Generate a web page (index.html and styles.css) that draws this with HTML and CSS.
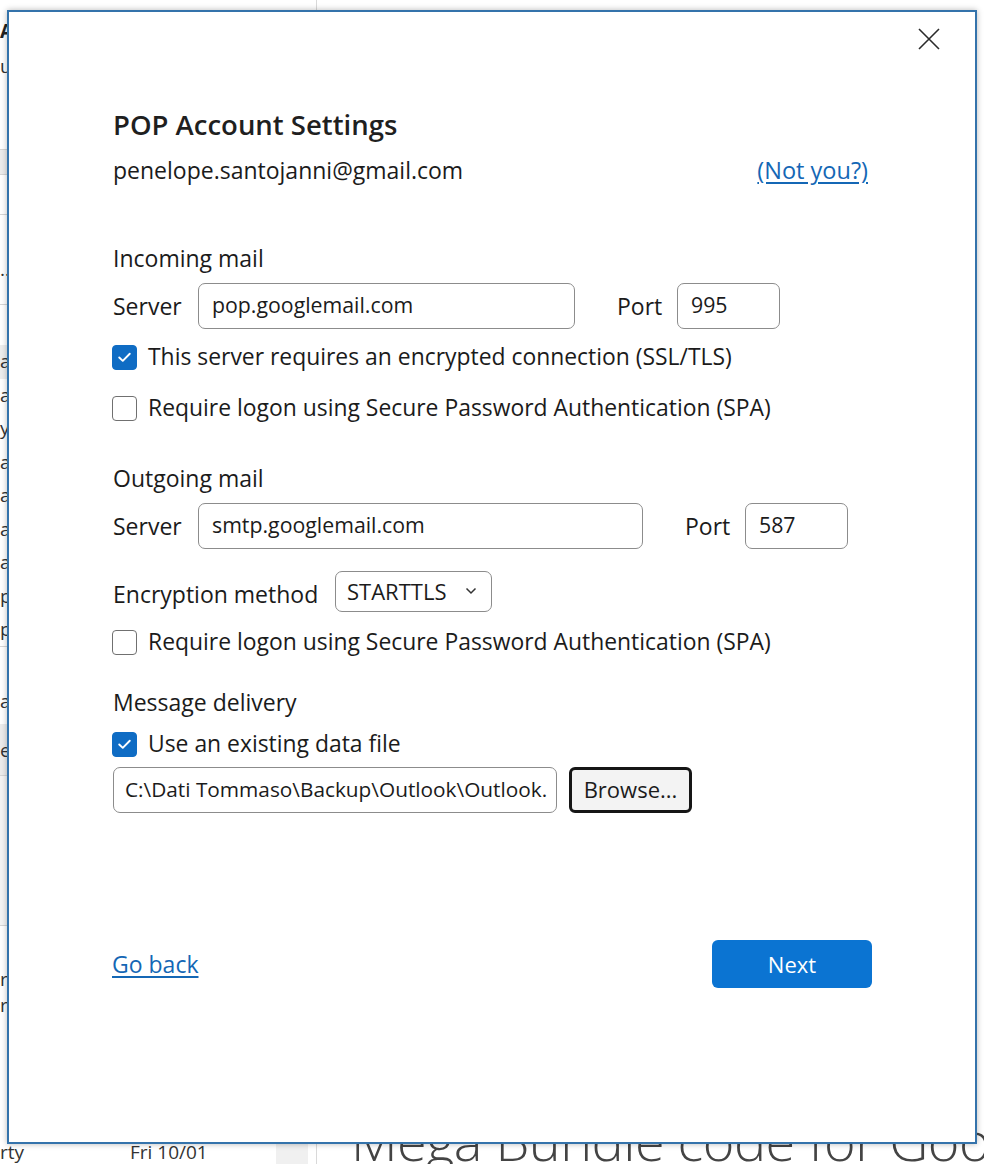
FILE: index.html
```html
<!DOCTYPE html>
<html lang="en">

<head>
    <meta charset="UTF-8">
    <meta name="viewport" content="width=device-width, initial-scale=1.0">
    <title>POP Account Settings</title>
    <link rel="stylesheet" href="styles.css">
</head>

<body>

    <!-- Outlook window behind the dialog -->
    <div class="app">
        <div class="list">
            <div class="list-top">
                <div class="acct">Alerts</div>
                <div class="sub">unread</div>
            </div>
            <div class="tab-row">Focused</div>
            <div class="filter-row">Other</div>
            <div class="search-row">…</div>
            <div class="group-head"></div>
            <div class="mail sel">a</div>
            <div class="mail">a</div>
            <div class="mail">y</div>
            <div class="mail">a</div>
            <div class="mail">a</div>
            <div class="mail">a</div>
            <div class="mail">a</div>
            <div class="mail">p</div>
            <div class="mail last">p</div>
            <div class="mail-gap"></div>
            <div class="mail">a</div>
            <div class="mail-band">e</div>
            <div class="mail-shade"></div>
            <div class="mail small">r</div>
            <div class="mail small">r</div>
            <div class="list-bottom">
                <span class="from">rty</span>
                <span class="date">Fri 10/01</span>
                <span class="flag-col"></span>
            </div>
        </div>
        <div class="reading">
            <h1 class="subject">Mega Bundle code for Google Workspace</h1>
        </div>
    </div>

    <div class="dialog">
        <div class="topbar">
            <button class="close" aria-label="Close">
                <svg width="22" height="22" viewBox="0 0 22 22">
                    <path d="M1 1 L21 21 M21 1 L1 21" stroke="#2b2b2b" stroke-width="1.6" fill="none" />
                </svg>
            </button>
        </div>

        <div class="content">
            <h2 class="title">POP Account Settings</h2>
            <div class="account">
                <span>penelope.santojanni@gmail.com</span>
                <a href="#" class="link not-you">(Not you?)</a>
            </div>

            <div class="group incoming">
                <div class="section-label">Incoming mail</div>
                <div class="field-row">
                    <span class="field-label">Server</span>
                    <div class="input server-in">pop.googlemail.com</div>
                    <span class="port-label">Port</span>
                    <div class="input port">995</div>
                </div>
                <div class="check-row first">
                    <span class="box on">
                        <svg width="24" height="24" viewBox="0 0 24 24">
                            <path d="M6.5 12.5 L10.2 16 L17.5 8.6" stroke="#fff" stroke-width="2" fill="none" stroke-linecap="round" stroke-linejoin="round" />
                        </svg>
                    </span>
                    <span>This server requires an encrypted connection (SSL/TLS)</span>
                </div>
                <div class="check-row">
                    <span class="box"></span>
                    <span>Require logon using Secure Password Authentication (SPA)</span>
                </div>
            </div>

            <div class="group outgoing">
                <div class="section-label">Outgoing mail</div>
                <div class="field-row">
                    <span class="field-label">Server</span>
                    <div class="input server-out">smtp.googlemail.com</div>
                    <span class="port-label">Port</span>
                    <div class="input port">587</div>
                </div>
                <div class="enc-row">
                    <span class="enc-label">Encryption method</span>
                    <div class="select">
                        <span>STARTTLS</span>
                        <svg width="12" height="8" viewBox="0 0 12 8">
                            <path d="M1.5 1.5 L6 6 L10.5 1.5" stroke="#333" stroke-width="1.5" fill="none" />
                        </svg>
                    </div>
                </div>
                <div class="check-row first">
                    <span class="box"></span>
                    <span>Require logon using Secure Password Authentication (SPA)</span>
                </div>
            </div>

            <div class="group delivery">
                <div class="section-label">Message delivery</div>
                <div class="check-row tight">
                    <span class="box on">
                        <svg width="24" height="24" viewBox="0 0 24 24">
                            <path d="M6.5 12.5 L10.2 16 L17.5 8.6" stroke="#fff" stroke-width="2" fill="none" stroke-linecap="round" stroke-linejoin="round" />
                        </svg>
                    </span>
                    <span>Use an existing data file</span>
                </div>
                <div class="path-row">
                    <div class="input path">C:\Dati Tommaso\Backup\Outlook\Outlook.</div>
                    <button class="browse">Browse...</button>
                </div>
            </div>

            <div class="footer">
                <a href="#" class="link">Go back</a>
                <button class="next">Next</button>
            </div>
        </div>
    </div>

</body>

</html>
```

FILE: styles.css
```css
* {
    margin: 0;
    padding: 0;
    box-sizing: border-box;
}

body {
    font-family: "Open Sans", "Noto Sans", sans-serif;
    color: #1b1b1b;
    background: #fff;
    height: 1164px;
    overflow: hidden;
    position: relative;
}

/* window behind */

.app {
    display: flex;
    height: 1164px;
}

.list {
    width: 317px;
    border-right: 1px solid #d9d9d9;
    display: flex;
    flex-direction: column;
    font-size: 19px;
    color: #333;
}

.list-top {
    height: 150px;
    padding-top: 18px;
    border-bottom: 1px solid #d6d6d6;
}

.acct {
    font-weight: 700;
    line-height: 26px;
    color: #222;
}

.sub {
    line-height: 26px;
    margin-top: 9px;
}

.tab-row {
    height: 25px;
    background: #ececec;
    border-bottom: 1px solid #d6d6d6;
    color: transparent;
}

.filter-row {
    height: 40px;
    border-bottom: 1px solid #d6d6d6;
    color: transparent;
}

.search-row {
    height: 90px;
    border-bottom: 1px solid #d6d6d6;
    display: flex;
    align-items: flex-end;
    padding-bottom: 22px;
}

.group-head {
    height: 40px;
}

.mail {
    height: 33.5px;
    line-height: 33.5px;
}

.mail.sel {
    background: #ededed;
}

.mail.last {
    border-bottom: 1px solid #d6d6d6;
}

.mail-gap {
    height: 38px;
}

.mail-band {
    height: 52px;
    margin-top: 6px;
    line-height: 52px;
    background: #ececec;
    border-bottom: 1px solid #d6d6d6;
}

.mail-shade {
    height: 150px;
    background: #f4f4f4;
    border-bottom: 1px solid #d6d6d6;
}

.mail.small {
    height: 26px;
    line-height: 26px;
    margin-top: 40px;
}

.mail.small + .mail.small {
    margin-top: 0;
}

.list-bottom {
    margin-top: auto;
    height: 24px;
    display: flex;
    align-items: flex-end;
    line-height: 24px;
}

.from {
    width: 130px;
}

.date {
    width: 146px;
    font-size: 19px;
}

.flag-col {
    width: 32px;
    height: 24px;
    background: #f0f0f0;
}

.reading {
    flex: 1;
    padding: 1110px 0 0 34px;
    overflow: hidden;
}

.subject {
    font-size: 54px;
    font-weight: 300;
    line-height: 60px;
    color: #444;
    white-space: nowrap;
    letter-spacing: -0.5px;
}

/* dialog */

.dialog {
    position: absolute;
    left: 7px;
    top: 10px;
    width: 970px;
    height: 1134px;
    background: #fff;
    border: 2px solid #3473ab;
    box-shadow: 0 0 6px rgba(0, 0, 0, 0.28);
}

.topbar {
    display: flex;
    justify-content: flex-end;
    padding: 7px 26px 0 0;
}

.close {
    width: 40px;
    height: 40px;
    border: none;
    background: none;
    display: flex;
    align-items: center;
    justify-content: center;
}

.content {
    padding: 0 103px 0 104px;
    font-size: 23px;
}

.title {
    margin-top: 48px;
    font-size: 27.5px;
    font-weight: 600;
    line-height: 36px;
    color: #1f1f1f;
}

.account {
    margin-top: 11px;
    display: flex;
    justify-content: space-between;
    align-items: center;
    line-height: 32px;
    padding-right: 4px;
}

.link {
    color: #1467b5;
    text-decoration: underline;
    text-underline-offset: 3px;
}

.not-you {
    font-size: 23.5px;
}

.group.incoming {
    margin-top: 56px;
}

.group.outgoing {
    margin-top: 38px;
}

.group.delivery {
    margin-top: 28px;
}

.section-label {
    line-height: 32px;
}

.field-row {
    display: flex;
    align-items: center;
    margin-top: 9px;
}

.field-label {
    width: 85px;
}

.input {
    height: 46px;
    border: 1.5px solid #8c8c8c;
    border-radius: 7px;
    padding: 0 13px 3px;
    display: flex;
    align-items: center;
    white-space: nowrap;
    overflow: hidden;
    font-size: 21.3px;
}

.server-in {
    width: 377px;
}

.server-out {
    width: 445px;
}

.port-label {
    margin-left: 42px;
    width: 60px;
}

.port {
    width: 103px;
}

.check-row {
    display: flex;
    align-items: center;
    gap: 11px;
    line-height: 32px;
    margin-top: 19px;
    font-size: 22.9px;
}

.check-row.first {
    margin-top: 12px;
}

.outgoing .check-row.first {
    margin-top: 14px;
}

.check-row.tight {
    margin-top: 10px;
}

.box {
    width: 25px;
    height: 25px;
    flex-shrink: 0;
    border: 1.5px solid #707070;
    border-radius: 4px;
    margin-left: -1px;
    display: flex;
    align-items: center;
    justify-content: center;
}

.box.on {
    background: #0f6cc4;
    border-color: #0f6cc4;
}

.enc-row {
    display: flex;
    align-items: center;
    margin-top: 22px;
}

.enc-label {
    width: 222px;
    padding-top: 5px;
}

.select {
    width: 157px;
    height: 41px;
    border: 1.5px solid #8c8c8c;
    border-radius: 7px;
    padding: 0 14px 2px 11px;
    display: flex;
    align-items: center;
    justify-content: space-between;
    font-size: 22px;
}

.path-row {
    display: flex;
    align-items: center;
    gap: 12px;
    margin-top: 7px;
}

.path {
    width: 444px;
    padding-left: 11px;
    font-size: 20.8px;
}

.browse {
    width: 123px;
    height: 46px;
    border: 3px solid #161616;
    border-radius: 6px;
    background: #f3f3f3;
    font-family: "Open Sans", "Noto Sans", sans-serif;
    font-size: 22px;
    color: #1b1b1b;
    padding-bottom: 2px;
}

.footer {
    margin-top: 127px;
    display: flex;
    justify-content: space-between;
    align-items: center;
}

.footer .link {
    margin-left: -1px;
}

.next {
    width: 160px;
    height: 48px;
    border: none;
    border-radius: 6px;
    background: #0b74d2;
    color: #fff;
    font-family: "Open Sans", "Noto Sans", sans-serif;
    font-size: 22px;
}
```
